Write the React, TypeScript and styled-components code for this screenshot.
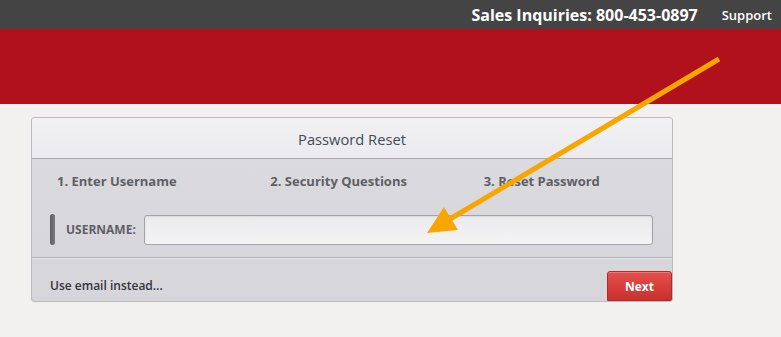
import React from 'react';
import styled, { createGlobalStyle } from 'styled-components';

const GlobalStyle = createGlobalStyle`
  html, body {
    margin: 0;
    padding: 0;
  }
  body {
    background-color: #f2f1ef;
    font-family: 'Open Sans', 'Liberation Sans', sans-serif;
    min-height: 337px;
  }
`;

const Page = styled.div`
  position: relative;
  width: 100%;
  min-height: 337px;
`;

const TopBar = styled.header`
  height: 29px;
  background-color: #444444;
  display: flex;
  align-items: center;
  justify-content: flex-end;
  gap: 24px;
  padding-right: 9px;
  color: #ffffff;
`;

const Sales = styled.span`
  font-size: 16px;
  font-weight: 700;
`;

const TopLink = styled.a`
  font-size: 13px;
  font-weight: 600;
  color: #ffffff;
  text-decoration: none;
  margin-top: 1px;
`;

const RedBand = styled.div`
  height: 75px;
  background-color: #b0111c;
`;

const Main = styled.main`
  padding: 13px 0 0 31px;
`;

const Card = styled.section`
  width: 640px;
  border: 1px solid #bcbbc0;
  border-radius: 3px;
  background: linear-gradient(180deg, #dcdbdf 0%, #d6d5d9 100%);
  overflow: hidden;
`;

const CardHeader = styled.div`
  height: 41px;
  background: linear-gradient(180deg, #f1f0f3 0%, #ebeaee 100%);
  border-bottom: 1px solid #a9a8ad;
  display: flex;
  align-items: center;
  justify-content: center;
  font-size: 14.7px;
  color: #434b55;
  padding-top: 1px;
  box-sizing: border-box;
`;

const Steps = styled.ol`
  list-style: none;
  margin: 0;
  padding: 13px 0 0;
  height: 45px;
  box-sizing: border-box;
  display: grid;
  grid-template-columns: repeat(3, 1fr);
`;

const Step = styled.li`
  padding-left: 25px;
  font-size: 13px;
  font-weight: 700;
  color: #605f67;
  line-height: 18px;
`;

const FieldRow = styled.div`
  display: flex;
  align-items: center;
  padding: 10px 19px 12px 18px;
  border-bottom: 1px solid #b3b2b7;
  box-shadow: 0 1px 0 #e6e5e9;
`;

const Marker = styled.span`
  width: 5px;
  height: 31px;
  border-radius: 3px;
  background: linear-gradient(90deg, #5f5f63 0%, #79797d 100%);
  flex-shrink: 0;
`;

const Label = styled.label`
  margin-left: 11px;
  width: 78px;
  font-size: 12px;
  font-weight: 700;
  color: #5f5e66;
  flex-shrink: 0;
`;

const Input = styled.input`
  flex: 1;
  height: 30px;
  box-sizing: border-box;
  border: 1px solid #a4a3a9;
  border-radius: 3px;
  background: linear-gradient(180deg, #ebebed 0%, #f3f3f4 100%);
  box-shadow: inset 0 1px 2px rgba(0, 0, 0, 0.08);
  outline: none;
  font-family: inherit;
  font-size: 13px;
  padding: 0 8px;
`;

const Footer = styled.div`
  height: 42px;
  display: flex;
  align-items: flex-end;
  justify-content: space-between;
  padding-left: 18px;
  margin-top: 1px;
`;

const EmailLink = styled.a`
  font-size: 12px;
  font-weight: 600;
  color: #34333a;
  text-decoration: none;
  padding-bottom: 7px;
`;

const NextButton = styled.button`
  width: 65px;
  height: 30px;
  border: 1px solid #b22a28;
  border-radius: 3px 3px 0 0;
  background: linear-gradient(180deg, #e54f4c 0%, #c8302d 100%);
  box-shadow: inset 0 1px 0 rgba(255, 255, 255, 0.25);
  color: #ffffff;
  font-family: inherit;
  font-size: 12px;
  font-weight: 700;
  cursor: pointer;
  padding: 0;
`;

const Overlay = styled.svg`
  position: absolute;
  top: 0;
  left: 0;
  pointer-events: none;
`;

export default function App() {
  return (
    <Page>
      <GlobalStyle />
      <TopBar>
        <Sales>Sales Inquiries: 800-453-0897</Sales>
        <TopLink href="#">Support</TopLink>
      </TopBar>
      <RedBand />
      <Main>
        <Card>
          <CardHeader>Password Reset</CardHeader>
          <Steps>
            <Step>1. Enter Username</Step>
            <Step>2. Security Questions</Step>
            <Step>3. Reset Password</Step>
          </Steps>
          <FieldRow>
            <Marker />
            <Label htmlFor="username">USERNAME:</Label>
            <Input id="username" type="text" />
          </FieldRow>
          <Footer>
            <EmailLink href="#">Use email instead...</EmailLink>
            <NextButton>Next</NextButton>
          </Footer>
        </Card>
      </Main>
      <Overlay width="781" height="337" viewBox="0 0 781 337">
        <line x1="719" y1="59" x2="450" y2="219" stroke="#f7a600" strokeWidth="5" strokeLinecap="butt" />
        <polygon points="427,233 444,207 458,230" fill="#f7a600" />
      </Overlay>
    </Page>
  );
}
